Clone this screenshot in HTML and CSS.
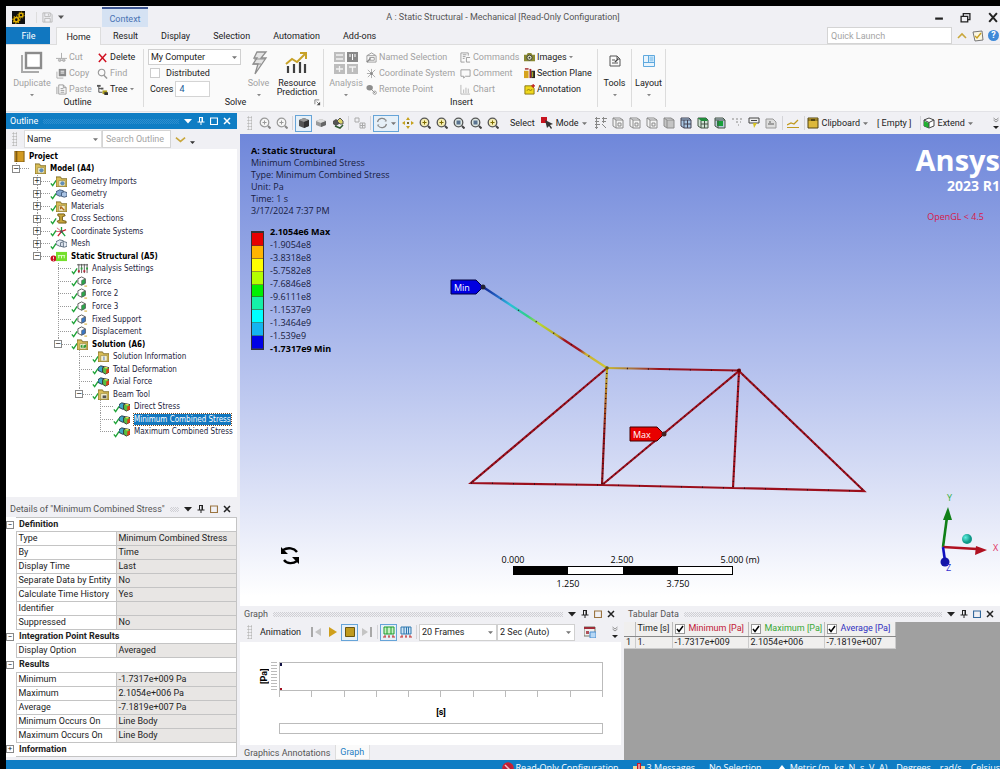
FILE: index.html
```html
<!DOCTYPE html>
<html lang="en">
<head>
    <meta charset="UTF-8">
    <title>A : Static Structural - Mechanical [Read-Only Configuration]</title>
    <link rel="stylesheet" href="styles.css">
</head>
<body>
    <!-- icon sprite -->
    <svg class="sprite" aria-hidden="true">
        <symbol id="i-gears" viewBox="0 0 12 12"><rect width="12" height="12" fill="#111"/><g fill="none" stroke="#e0b000"><circle cx="4" cy="8" r="2" stroke-width="1.6"/><circle cx="8.3" cy="3.8" r="1.8" stroke-width="1.4"/><circle cx="4" cy="8" r="3.2" stroke-dasharray="1.2 1.2"/><circle cx="8.3" cy="3.8" r="2.9" stroke-width=".8" stroke-dasharray="1.1 1.1"/></g></symbol>
        <symbol id="i-save" viewBox="0 0 12 12"><path d="M1 1h8l2 2v8H1zM3 1v4h6V1M3 11V7h6v4M7 2v2" fill="none" stroke="#b8b8b8"/></symbol>
        <symbol id="i-duplicate" viewBox="0 0 24 24"><path d="M2 4v17h17" fill="none" stroke="#aaa" stroke-width="2"/><rect x="6" y="2" width="15" height="15" fill="#fff" stroke="#8c8c8c" stroke-width="2.4"/></symbol>
        <symbol id="i-cut" viewBox="0 0 12 12"><path d="M0 7h12M6 1v6M3 9h7" stroke="#aaa" fill="none"/><circle cx="4" cy="9" r="1.4" fill="none" stroke="#aaa"/><circle cx="8.5" cy="9" r="1.4" fill="none" stroke="#aaa"/></symbol>
        <symbol id="i-copy" viewBox="0 0 12 12"><path d="M1 4v7h7" fill="none" stroke="#aaa"/><rect x="3" y="1" width="8" height="8" fill="#8a8a8a"/><path d="M5 3.5h4M5 5.5h4" stroke="#fff"/></symbol>
        <symbol id="i-paste" viewBox="0 0 12 12"><path d="M1 3v8M3 1h5l3 3v7H3zM8 1v3h3M5 5h3M5 7h4M5 9h4" fill="none" stroke="#999"/></symbol>
        <symbol id="i-delete" viewBox="0 0 12 12"><path d="M2 2l8 9M10 2l-8 9" stroke="#d01020" stroke-width="1.6"/></symbol>
        <symbol id="i-find" viewBox="0 0 12 12"><circle cx="5" cy="5" r="3.6" fill="none" stroke="#999" stroke-width="1.2"/><path d="M7.5 8l3.5 3.5" stroke="#999" stroke-width="1.6"/></symbol>
        <symbol id="i-tree" viewBox="0 0 12 12"><path d="M2 2v7h4M2 5h3" fill="none" stroke="#444"/><path d="M0 1h4v2H0z" fill="#555"/><path d="M4 4h3v2H4z" fill="#555"/><path d="M6 7h5v4H6z" fill="#b0a020"/><path d="M8 9h4v3H8z" fill="#333"/></symbol>
        <symbol id="i-bolt" viewBox="0 0 24 24"><path d="M10 1h9l-5 6h5L8 23l3-10H6l4-6H7z" fill="#e4e4e4" stroke="#8e8e8e" stroke-width="1.3"/><path d="M7 8h11M6 13h8" stroke="#8e8e8e"/></symbol>
        <symbol id="i-resource" viewBox="0 0 24 24"><path d="M3 22v-7M9 22v-9M15 22V11M20 22v-9" stroke="#404040" stroke-width="2.2"/><path d="M1 13l6-5 5 3 8-8M15 2h6v6" fill="none" stroke="#c8a228" stroke-width="2"/></symbol>
        <symbol id="i-analysis" viewBox="0 0 24 24"><path d="M0 1h11v10H0zM13 13h11v10H13zM0 13h11v10H0z" fill="#bdbdbd"/><path d="M13 1h11v10H13z" fill="#888"/><path d="M2 4h7M2 8h7M2 18h7M5.5 15v6M15 16h7M18.5 16v5" stroke="#f2f2f2" stroke-width="1.3"/><path d="M18.5 3v6M16 3v3M21 3v3" stroke="#fff"/></symbol>
        <symbol id="i-named" viewBox="0 0 12 12"><path d="M1 4l5-3 5 3v7H1zM1 4h9M4 6h5v3H4z" fill="none" stroke="#999"/><path d="M1 11l4-4" stroke="#888" stroke-width="1.5"/></symbol>
        <symbol id="i-coord" viewBox="0 0 12 12"><path d="M2 2l8 8M10 2l-8 8M6 1v10M1 6h4" stroke="#aaa"/><circle cx="6" cy="6" r="1.5" fill="#888"/></symbol>
        <symbol id="i-remote" viewBox="0 0 12 12"><ellipse cx="4" cy="4" rx="3.5" ry="3" fill="#8d8d8d"/><path d="M5 5l5 5" stroke="#888"/><circle cx="9.5" cy="9.5" r="1.8" fill="none" stroke="#999"/></symbol>
        <symbol id="i-commands" viewBox="0 0 12 12"><path d="M1 1h8v3M1 1v10h4M3 3h4M3 5h3M3 7h2" fill="none" stroke="#999"/><path d="M11 6H7v5h4" fill="none" stroke="#999"/></symbol>
        <symbol id="i-comment" viewBox="0 0 12 12"><path d="M1 2h10v7H6l-2 2V9H1z" fill="none" stroke="#999"/></symbol>
        <symbol id="i-chart" viewBox="0 0 12 12"><path d="M1 1v10h10M4 10V6M6.5 10V4M9 10V5" fill="none" stroke="#b4b4b4"/></symbol>
        <symbol id="i-camera" viewBox="0 0 12 12"><path d="M0 3h3l1-2h4l1 2h3v7H0z" fill="#8a8a32"/><circle cx="6" cy="6.2" r="2.8" fill="#dfe6c0" stroke="#333"/><circle cx="6" cy="6.2" r="1" fill="#333"/></symbol>
        <symbol id="i-section" viewBox="0 0 12 12"><path d="M0 3h5v8H0z" fill="#d6a31c"/><path d="M6 1h2v10H6z" fill="#a02020"/><path d="M8 3h4v8H8z" fill="#222"/><path d="M9.5 4v6" stroke="#d8d020"/><path d="M1 1h4" stroke="#a02020" stroke-width="1.5"/></symbol>
        <symbol id="i-annot" viewBox="0 0 12 12"><path d="M1 2h8l2 3v6H1z" fill="#f0d81c" stroke="#857410"/><path d="M3 7l2-1 2 1 2-1" fill="none" stroke="#857410"/><path d="M8 2h4M10 0v4" stroke="#c01818" stroke-width="1.2"/></symbol>
        <symbol id="i-tools" viewBox="0 0 12 12"><path d="M1 1h7l3 3v7H1zM8 1v3h3M3 5h3M3 8h6" fill="none" stroke="#555"/><path d="M6 7l3-3" stroke="#444" stroke-width="1.5"/></symbol>
        <symbol id="i-layout" viewBox="0 0 12 12"><path d="M.5.5h11v11H.5zM5.5.5v7M.5 7.5h11" fill="#e8f4fd" stroke="#5fa9de"/><path d="M6.5 1.5h4v5h-4z" fill="#9fd0f2"/></symbol>
        <symbol id="i-zoomin" viewBox="0 0 12 12"><circle cx="5.5" cy="5.5" r="4.3" fill="#f6f6f6" stroke="#999" stroke-width="1.2"/><path d="M3.5 5.5h4M5.5 3.5v4" stroke="#999"/><path d="M9 9l2.5 2.5" stroke="#888" stroke-width="2"/></symbol>
        <symbol id="i-zoomy" viewBox="0 0 12 12"><circle cx="5.5" cy="5.5" r="4.3" fill="#f4edb4" stroke="#555" stroke-width="1.3"/><path d="M3.5 5.5h4M5.5 3.5v4" stroke="#7c6a00"/><path d="M9 9l2.5 2.5" stroke="#444" stroke-width="2"/></symbol>
        <symbol id="i-zoomb" viewBox="0 0 12 12"><circle cx="5.5" cy="5.5" r="4.3" fill="#dfe8e4" stroke="#555" stroke-width="1.3"/><rect x="3.5" y="3.5" width="4" height="4" fill="#5a7390"/><path d="M9 9l2.5 2.5" stroke="#444" stroke-width="2"/></symbol>
        <symbol id="i-cube" viewBox="0 0 12 12"><path d="M6 1l5 2v6l-5 2-5-2V3z" fill="#555"/><path d="M6 1l5 2-5 2-5-2z" fill="#999"/><path d="M6 5v6l5-2V3z" fill="#333"/></symbol>
        <symbol id="i-cubel" viewBox="0 0 12 12"><path d="M6 2l5 2v4l-5 2-5-2V4z" fill="#999"/><path d="M6 2l5 2-5 2-5-2z" fill="#ddd"/><path d="M6 6v4l5-2V4z" fill="#666"/></symbol>
        <symbol id="i-cubes" viewBox="0 0 12 12"><path d="M1 4l3-2 3 2v3L4 9 1 7z" fill="#555"/><path d="M5 4l3-3 3 3v3H8z" fill="#dcd36a" stroke="#555"/><path d="M3 9l5 2 3-3" fill="none" stroke="#2f5a2f" stroke-width="1.5"/></symbol>
        <symbol id="i-boxes" viewBox="0 0 12 12"><path d="M1 1h4v4H1zM6 6h5v5H6zM8.5 6v5M6 8.5h5" fill="none" stroke="#aaa"/></symbol>
        <symbol id="i-rotate" viewBox="0 0 12 12"><path d="M1.5 5A4.7 4.7 0 0 1 10 3.5M10.5 7A4.7 4.7 0 0 1 2 8.5" fill="none" stroke="#888" stroke-width="1.2"/><path d="M10.5 2.5v2H8.500zM1.500 9.500v-2h2z" fill="#888"/></symbol>
        <symbol id="i-pan" viewBox="0 0 12 12"><path d="M6 0l2 3H4zM6 12l2-3H4zM0 6l3-2v4zM12 6L9 4v4z" fill="#c5a11c"/><path d="M5 5h2v2H5z" fill="#7d6a20"/></symbol>
        <symbol id="i-cursor" viewBox="0 0 12 12"><path d="M0 0h6v6H0z" fill="#c81420"/><path d="M4 3l8 4-3 1 2 3-1 1-2-3-2 2z" fill="#333"/></symbol>
        <symbol id="i-wires" viewBox="0 0 12 12"><path d="M0 1.5h5M7 1.5h5M0 4.500h4M7 4.500h4M0 7.500h5M0 10.500h3M7 7l4 4M1.500 0v12M8.500 0v6" fill="none" stroke="#888"/></symbol>
        <symbol id="i-wcube" viewBox="0 0 12 12"><path d="M1 1h7l3 2v8H4L1 9zM1 1l3 2h7M4 3v8M6 6h3v3H6z" fill="#f4f4f4" stroke="#8c8c8c"/></symbol>
        <symbol id="i-gcube" viewBox="0 0 12 12"><path d="M1 1h7l3 2v8H4L1 9zM1 1l3 2h7M4 3v8" fill="#c4c4c4" stroke="#8c8c8c"/></symbol>
        <symbol id="i-bmesh" viewBox="0 0 12 12"><path d="M1 1h8l2 2v8H4L1 9z" fill="#a9c6e2" stroke="#445"/><path d="M4 3v8M7.5 3v8M1 3h10M4 7h7" stroke="#445"/></symbol>
        <symbol id="i-gmesh" viewBox="0 0 12 12"><path d="M1 1h8l2 2v8H4L1 9z" fill="#cfe2d4" stroke="#454"/><path d="M1 1h8l2 3H4z" fill="#218c3c"/><path d="M4 4v7M7.5 4v7M4 7h7" stroke="#454"/></symbol>
        <symbol id="i-gmesh2" viewBox="0 0 12 12"><path d="M1 1h8l2 2v8H4L1 9z" fill="#b9c8d8" stroke="#454"/><path d="M3 4h6v5H3z" fill="#17a03a"/><path d="M4 3v8M1 3h10" stroke="#454"/></symbol>
        <symbol id="i-dots" viewBox="0 0 12 12"><path d="M1 2h2M5 2h2M9 2h2M5 5h2M7 8h1M9 5h1" stroke="#aaa" stroke-width="1.5"/></symbol>
        <symbol id="i-flag" viewBox="0 0 12 12"><path d="M1 1h10v5H1z" fill="#eee" stroke="#444"/><path d="M3 3.5h6" stroke="#444"/><path d="M5 6h4L6 11z" fill="#d4c020"/></symbol>
        <symbol id="i-abc" viewBox="0 0 12 12"><path d="M1 2h7l3 3v6H1z" fill="#ddd" stroke="#999"/><path d="M3 7h6M4 5h2" stroke="#888" stroke-width="1.5"/></symbol>
        <symbol id="i-line" viewBox="0 0 12 12"><path d="M0 8l4-2 3 1 4-4" fill="none" stroke="#c09a20" stroke-width="1.3"/><path d="M0 10.5h12" stroke="#c09a20"/></symbol>
        <symbol id="i-clip" viewBox="0 0 12 12"><path d="M1 1h10v10H1z" fill="#dcb83c" stroke="#544612"/><path d="M1 3h10" stroke="#544612"/><path d="M4 2h4v2H4z" fill="#544612"/></symbol>
        <symbol id="i-extend" viewBox="0 0 12 12"><path d="M6 1l5 2v6l-5 2-5-2V3z" fill="#fff" stroke="#444"/><path d="M1 4l5 2v5L1 9z" fill="#20b030"/><path d="M6 5.5v5M1 3l5 2.5L11 3" stroke="#444" fill="none"/></symbol>
        <symbol id="i-book" viewBox="0 0 12 12"><path d="M1 0h10v12H1z" fill="#d29a22" stroke="#7a5510"/><path d="M3 0v12" stroke="#5c3f0a"/></symbol>
        <symbol id="i-folder" viewBox="0 0 12 12"><path d="M0 1h5l1 2h6v9H0z" fill="#d8bd58" stroke="#7e6a22"/><path d="M3 5h7v6H3z" fill="#f7f2d2" stroke="#8a7a34" stroke-width=".6"/></symbol>
        <symbol id="i-fmodel" viewBox="0 0 12 12"><use href="#i-folder"/><circle cx="7" cy="8" r="2.3" fill="#5f8db8"/></symbol>
        <symbol id="i-fmat" viewBox="0 0 12 12"><use href="#i-folder"/><path d="M5 6l4 4M5 6v3" stroke="#b06818" stroke-width="1.5"/></symbol>
        <symbol id="i-finfo" viewBox="0 0 12 12"><use href="#i-folder"/><path d="M6.5 6v4" stroke="#3a6ad0"/></symbol>
        <symbol id="i-fbeam" viewBox="0 0 12 12"><use href="#i-folder"/><path d="M5 7h4v3H5z" fill="#555"/></symbol>
        <symbol id="i-fsol" viewBox="0 0 12 12"><use href="#i-folder"/><path d="M4 7l2-1v4l-2-1zM7 7l3-1v3l-3 1z" fill="#2f9a38"/></symbol>
        <symbol id="i-geom" viewBox="0 0 12 12"><path d="M0 4l4-2 4 1v5l-4 1-4-2z" fill="#86a9d2" stroke="#3f5878"/><path d="M6 5l3-1 3 1v4l-3 1-3-1z" fill="#a9c3e4" stroke="#3f5878"/></symbol>
        <symbol id="i-beam" viewBox="0 0 12 12"><path d="M2 1h7l1 2-3 1v4l4 1v2H3L1 9l3-1V4L2 3z" fill="#c8a63c" stroke="#6b5510"/></symbol>
        <symbol id="i-axes" viewBox="0 0 12 12"><path d="M6 6V1M6 6l4 5" stroke="#1f9f3f" stroke-width="1.4"/><path d="M6 6l5-2M6 6l-4 5" stroke="#d02030" stroke-width="1.4"/><path d="M6 6L1 2M6 6H0" stroke="#d06070"/><circle cx="6" cy="6" r="1.5" fill="#555"/></symbol>
        <symbol id="i-mesh" viewBox="0 0 12 12"><path d="M0 4l4-2 4 1v5l-4 1-4-2z" fill="#e4ebf4" stroke="#5a6a7c"/><path d="M5 5l4-1 3 1v4l-3 1-4-1zM8 5v5" fill="#e4ebf4" stroke="#5a6a7c"/></symbol>
        <symbol id="i-struct" viewBox="0 0 12 12"><path d="M0 1h12v10H0z" fill="#74df2c"/><path d="M2 5h8M3 5v3M6 5v3M9 5v3" stroke="#e6ffd0"/></symbol>
        <symbol id="i-settings" viewBox="0 0 12 12"><path d="M2 1v10M5 1v10M8 1v10M11 1v10M0 2h12" stroke="#555" fill="none"/><path d="M1 8h2v2H1zM7 8h2v2H7z" fill="#c02030"/><path d="M4 5h2v2H4zM10 5h2v2h-2z" fill="#2f9f3f"/></symbol>
        <symbol id="i-force" viewBox="0 0 12 12"><path d="M1 3l4-2 4 2v5l-4 2-4-2z" fill="#fff" stroke="#555"/><path d="M5 5l4-2v5l-4 2z" fill="#2aa84a" stroke="#555" stroke-width=".6"/><path d="M8 11h3" stroke="#d0a018"/></symbol>
        <symbol id="i-support" viewBox="0 0 12 12"><path d="M1 3l4-2 4 2v5l-4 2-4-2z" fill="#fff" stroke="#555"/><path d="M5 5l4-2v5l-4 2z" fill="#3a78c8" stroke="#555" stroke-width=".6"/><path d="M8 11h3" stroke="#d0a018"/></symbol>
        <symbol id="i-result" viewBox="0 0 12 12"><path d="M0 4l3-2 4 1v5l-3 1-4-2z" fill="#3fa8c8" stroke="#234"/><path d="M5 4l3-1 4 1v5l-4 2-3-2z" fill="#58c040" stroke="#333"/><path d="M9 6l3-1v4l-3 2z" fill="#d84018"/><path d="M6 4l3-1 2 1-2 1z" fill="#e8e050"/></symbol>
        <symbol id="i-check" viewBox="0 0 8 8"><path d="M1 4.5l2 2.5L7 1" fill="none" stroke="#1fa338" stroke-width="1.6"/></symbol>
        <symbol id="i-error" viewBox="0 0 8 8"><circle cx="4" cy="4.5" r="3.4" fill="#c80f22"/><path d="M4 2.5v2.5M4 6v1" stroke="#fff"/></symbol>
        <symbol id="i-caret" viewBox="0 0 8 8"><path d="M0 2h8L4 6.5z" fill="currentColor"/></symbol>
        <symbol id="i-pin" viewBox="0 0 8 8"><path d="M2.5 0v5M5.5 0v5M2 .5h4M.5 5h7M4 5v3M5 0v5" stroke="currentColor" fill="none"/></symbol>
        <symbol id="i-max" viewBox="0 0 8 8"><path d="M.5 1h7v6.5h-7z" fill="none" stroke="currentColor" stroke-width="1.2"/></symbol>
        <symbol id="i-x" viewBox="0 0 8 8"><path d="M1 1l6 6M7 1L1 7" stroke="currentColor" stroke-width="1.5"/></symbol>
        <symbol id="i-more" viewBox="0 0 8 12"><path d="M1.5 1L4 3l2.5-2M1.5 3L4 5l2.5-2" fill="none" stroke="#777" stroke-width=".8"/><path d="M1 9h6l-3 3z" fill="#222"/></symbol>
        <symbol id="i-framesg" viewBox="0 0 12 12"><path d="M1 1h10v7H1zM4 1v7M8 1v7" fill="#c9f0c4" stroke="#1d9c2c"/><path d="M0 11h3M5 11h2M9 11h3M2 9v2M6 9v2M10 9v2" fill="none" stroke="#c03030"/></symbol>
        <symbol id="i-framesb" viewBox="0 0 12 12"><path d="M1 1h10v7H1zM4 1v7M6.5 1v7M8.5 1v7" fill="#cfe5f6" stroke="#2f78b0"/><path d="M0 11h3M5 11h2M9 11h3M2 9v2M6 9v2M10 9v2" fill="none" stroke="#c03030"/></symbol>
        <symbol id="i-export" viewBox="0 0 12 12"><path d="M0 1h11v9H0z" fill="#eee" stroke="#776"/><path d="M0 2h11" stroke="#a02c38" stroke-width="2"/><path d="M2 5h3v3H2z" fill="#b05058"/><path d="M6 6h6v6H6z" fill="#b7d7f4" stroke="#4a8fd0"/></symbol>
    </svg>

    <header class="titlebar">
        <div class="quick">
            <svg class="ico13"><use href="#i-gears"/></svg>
            <button class="qa" aria-label="Save"><svg class="ico11"><use href="#i-save"/></svg></button>
            <button class="qa-more" aria-label="Customize"><svg class="ico6"><use href="#i-caret"/></svg></button>
            <div class="context">Context</div>
        </div>
        <h1>A : Static Structural - Mechanical [Read-Only Configuration]</h1>
        <div class="wincontrols">
            <button aria-label="Minimize"><svg viewBox="0 0 10 10"><path d="M2 6h7" stroke="#222" stroke-width="2"/></svg></button>
            <button aria-label="Restore"><svg viewBox="0 0 10 10"><path d="M1 4h6v5H1zM3 4V1.5h6V7H7" fill="none" stroke="#222" stroke-width="1.2"/></svg></button>
            <button aria-label="Close"><svg viewBox="0 0 10 10"><path d="M2 1l7 8M9 1L2 9" stroke="#222" stroke-width="1.8"/></svg></button>
        </div>
    </header>

    <nav class="tabs">
        <button class="tab file">File</button>
        <button class="tab home">Home</button>
        <button class="tab">Result</button>
        <button class="tab">Display</button>
        <button class="tab">Selection</button>
        <button class="tab">Automation</button>
        <button class="tab">Add-ons</button>
        <div class="launch">
            <input type="text" placeholder="Quick Launch" aria-label="Quick Launch">
            <button aria-label="Collapse ribbon"><svg viewBox="0 0 12 12"><path d="M2 8l4-4 4 4" fill="none" stroke="#c9a73c" stroke-width="1.6"/></svg></button>
            <button aria-label="Options"><svg viewBox="0 0 12 12"><path d="M1 2l9-1 1 9-8 1z" fill="#fbf6e0" stroke="#777"/><path d="M3 6l2 2 4-5" fill="none" stroke="#c9a020" stroke-width="1.4"/></svg></button>
            <button class="help" aria-label="Help">?</button>
        </div>
    </nav>

    <section class="ribbon">
        <div class="group g-outline">
            <div class="items">
                <button class="big off"><svg><use href="#i-duplicate"/></svg>Duplicate<svg class="car"><use href="#i-caret"/></svg></button>
                <div class="col c1">
                    <button class="off"><svg><use href="#i-cut"/></svg>Cut</button>
                    <button class="off"><svg><use href="#i-copy"/></svg>Copy</button>
                    <button class="off"><svg><use href="#i-paste"/></svg>Paste</button>
                </div>
                <div class="col">
                    <button><svg><use href="#i-delete"/></svg>Delete</button>
                    <button class="off"><svg><use href="#i-find"/></svg>Find</button>
                    <button><svg><use href="#i-tree"/></svg>Tree<svg class="car"><use href="#i-caret"/></svg></button>
                </div>
            </div>
            <div class="caption">Outline</div>
        </div>
        <div class="group g-solve">
            <div class="items">
                <div class="col solvecol">
                    <select aria-label="Solve process"><option>My Computer</option></select>
                    <label><input type="checkbox">Distributed</label>
                    <label class="corerow">Cores<input class="cores" type="text" value="4"></label>
                </div>
                <button class="big off"><svg><use href="#i-bolt"/></svg>Solve<svg class="car"><use href="#i-caret"/></svg></button>
                <button class="big wide"><svg><use href="#i-resource"/></svg>Resource<br>Prediction</button>
            </div>
            <div class="caption">Solve<svg class="launcher" viewBox="0 0 8 8"><path d="M1 6V1h5M3 3l3 3" fill="none" stroke="#777"/><path d="M7 3v4H3z" fill="#555"/></svg></div>
        </div>
        <div class="group g-insert">
            <div class="items">
                <button class="big off"><svg><use href="#i-analysis"/></svg>Analysis<svg class="car"><use href="#i-caret"/></svg></button>
                <div class="col c2">
                    <button class="off"><svg><use href="#i-named"/></svg>Named Selection</button>
                    <button class="off"><svg><use href="#i-coord"/></svg>Coordinate System</button>
                    <button class="off"><svg><use href="#i-remote"/></svg>Remote Point</button>
                </div>
                <div class="col c3">
                    <button class="off"><svg><use href="#i-commands"/></svg>Commands</button>
                    <button class="off"><svg><use href="#i-comment"/></svg>Comment</button>
                    <button class="off"><svg><use href="#i-chart"/></svg>Chart</button>
                </div>
                <div class="col">
                    <button><svg><use href="#i-camera"/></svg>Images<svg class="car"><use href="#i-caret"/></svg></button>
                    <button><svg><use href="#i-section"/></svg>Section Plane</button>
                    <button><svg><use href="#i-annot"/></svg>Annotation</button>
                </div>
            </div>
            <div class="caption">Insert</div>
        </div>
        <div class="group g-small">
            <button class="big small"><svg><use href="#i-tools"/></svg>Tools<svg class="car"><use href="#i-caret"/></svg></button>
        </div>
        <div class="group g-small">
            <button class="big small"><svg><use href="#i-layout"/></svg>Layout<svg class="car"><use href="#i-caret"/></svg></button>
        </div>
    </section>

    <main class="workspace">
        <aside class="left">
            <section class="outline">
                <div class="panelhead active"><h2>Outline</h2><span class="dots"></span>
                    <button aria-label="Menu"><svg><use href="#i-caret"/></svg></button><button aria-label="Pin"><svg><use href="#i-pin"/></svg></button><button aria-label="Maximize"><svg><use href="#i-max"/></svg></button><button aria-label="Close"><svg><use href="#i-x"/></svg></button>
                </div>
                <div class="filter">
                    <span class="grip"></span>
                    <select aria-label="Filter by"><option>Name</option></select>
                    <input type="text" placeholder="Search Outline" aria-label="Search Outline">
                    <button aria-label="Expand"><svg class="ico11" viewBox="0 0 12 12"><path d="M1 4l5 4 5-4" fill="none" stroke="#c9a73c" stroke-width="1.8"/></svg></button>
                    <button class="low" aria-label="More"><svg class="ico5"><use href="#i-caret"/></svg></button>
                </div>
                <ul class="tree">
                    <li class="l0"><svg class="ic"><use href="#i-book"/></svg><strong>Project</strong></li>
                    <li class="l1 last"><span class="tg"><button>−</button></span><svg class="st"></svg><svg class="ic"><use href="#i-fmodel"/></svg><strong>Model (A4)</strong></li>
                    <li class="l2"><span class="tg"><button>+</button></span><svg class="st"><use href="#i-check"/></svg><svg class="ic"><use href="#i-fmodel"/></svg><span>Geometry Imports</span></li>
                    <li class="l2"><span class="tg"><button>+</button></span><svg class="st"><use href="#i-check"/></svg><svg class="ic"><use href="#i-geom"/></svg><span>Geometry</span></li>
                    <li class="l2"><span class="tg"><button>+</button></span><svg class="st"><use href="#i-check"/></svg><svg class="ic"><use href="#i-fmat"/></svg><span>Materials</span></li>
                    <li class="l2"><span class="tg"><button>+</button></span><svg class="st"><use href="#i-check"/></svg><svg class="ic"><use href="#i-beam"/></svg><span>Cross Sections</span></li>
                    <li class="l2"><span class="tg"><button>+</button></span><svg class="st"><use href="#i-check"/></svg><svg class="ic"><use href="#i-axes"/></svg><span>Coordinate Systems</span></li>
                    <li class="l2"><span class="tg"><button>+</button></span><svg class="st"><use href="#i-check"/></svg><svg class="ic"><use href="#i-mesh"/></svg><span>Mesh</span></li>
                    <li class="l2 last"><span class="tg"><button>−</button></span><svg class="st"><use href="#i-error"/></svg><svg class="ic"><use href="#i-struct"/></svg><strong>Static Structural (A5)</strong></li>
                    <li class="l3"><span class="tg"></span><svg class="st"><use href="#i-check"/></svg><svg class="ic"><use href="#i-settings"/></svg><span>Analysis Settings</span></li>
                    <li class="l3"><span class="tg"></span><svg class="st"><use href="#i-check"/></svg><svg class="ic"><use href="#i-force"/></svg><span>Force</span></li>
                    <li class="l3"><span class="tg"></span><svg class="st"><use href="#i-check"/></svg><svg class="ic"><use href="#i-force"/></svg><span>Force 2</span></li>
                    <li class="l3"><span class="tg"></span><svg class="st"><use href="#i-check"/></svg><svg class="ic"><use href="#i-force"/></svg><span>Force 3</span></li>
                    <li class="l3"><span class="tg"></span><svg class="st"><use href="#i-check"/></svg><svg class="ic"><use href="#i-support"/></svg><span>Fixed Support</span></li>
                    <li class="l3"><span class="tg"></span><svg class="st"><use href="#i-check"/></svg><svg class="ic"><use href="#i-support"/></svg><span>Displacement</span></li>
                    <li class="l3 last"><span class="tg"><button>−</button></span><svg class="st"><use href="#i-check"/></svg><svg class="ic"><use href="#i-fsol"/></svg><strong>Solution (A6)</strong></li>
                    <li class="l4"><span class="tg"></span><svg class="st"><use href="#i-check"/></svg><svg class="ic"><use href="#i-finfo"/></svg><span>Solution Information</span></li>
                    <li class="l4"><span class="tg"></span><svg class="st"><use href="#i-check"/></svg><svg class="ic"><use href="#i-result"/></svg><span>Total Deformation</span></li>
                    <li class="l4"><span class="tg"></span><svg class="st"><use href="#i-check"/></svg><svg class="ic"><use href="#i-result"/></svg><span>Axial Force</span></li>
                    <li class="l4 last"><span class="tg"><button>−</button></span><svg class="st"><use href="#i-check"/></svg><svg class="ic"><use href="#i-fbeam"/></svg><span>Beam Tool</span></li>
                    <li class="l5"><span class="tg"></span><svg class="st"><use href="#i-check"/></svg><svg class="ic"><use href="#i-result"/></svg><span>Direct Stress</span></li>
                    <li class="l5"><span class="tg"></span><svg class="st"><use href="#i-check"/></svg><svg class="ic"><use href="#i-result"/></svg><span class="selected">Minimum Combined Stress</span></li>
                    <li class="l5 last"><span class="tg"></span><svg class="st"><use href="#i-check"/></svg><svg class="ic"><use href="#i-result"/></svg><span>Maximum Combined Stress</span></li>
                </ul>
            </section>
            <section class="details">
                <div class="panelhead"><h2>Details of "Minimum Combined Stress"</h2><span class="dots"></span>
                    <button aria-label="Menu"><svg><use href="#i-caret"/></svg></button><button aria-label="Pin"><svg><use href="#i-pin"/></svg></button><button class="gold" aria-label="Maximize"><svg><use href="#i-max"/></svg></button><button aria-label="Close"><svg><use href="#i-x"/></svg></button>
                </div>
                <table class="props">
                    <colgroup><col class="k0"><col class="k1"><col></colgroup>
                    <tr><td class="ex"><button>−</button></td><th colspan="2">Definition</th></tr>
                    <tr><td></td><td>Type</td><td>Minimum Combined Stress</td></tr>
                    <tr><td></td><td>By</td><td>Time</td></tr>
                    <tr><td></td><td>Display Time</td><td>Last</td></tr>
                    <tr><td></td><td>Separate Data by Entity</td><td>No</td></tr>
                    <tr><td></td><td>Calculate Time History</td><td>Yes</td></tr>
                    <tr><td></td><td>Identifier</td><td></td></tr>
                    <tr><td></td><td>Suppressed</td><td>No</td></tr>
                    <tr><td class="ex"><button>−</button></td><th colspan="2">Integration Point Results</th></tr>
                    <tr><td></td><td>Display Option</td><td>Averaged</td></tr>
                    <tr><td class="ex"><button>−</button></td><th colspan="2">Results</th></tr>
                    <tr><td></td><td>Minimum</td><td>-1.7317e+009 Pa</td></tr>
                    <tr><td></td><td>Maximum</td><td>2.1054e+006 Pa</td></tr>
                    <tr><td></td><td>Average</td><td>-7.1819e+007 Pa</td></tr>
                    <tr><td></td><td>Minimum Occurs On</td><td>Line Body</td></tr>
                    <tr><td></td><td>Maximum Occurs On</td><td>Line Body</td></tr>
                    <tr><td class="ex"><button>+</button></td><th colspan="2">Information</th></tr>
                </table>
            </section>
        </aside>

        <div class="right">
            <div class="toolbar">
                <span class="grip"></span>
                <button><svg><use href="#i-zoomin"/></svg></button>
                <button><svg><use href="#i-zoomin"/></svg></button>
                <span class="sep"></span>
                <button class="on"><svg><use href="#i-cube"/></svg></button>
                <button><svg><use href="#i-cubel"/></svg></button>
                <button><svg><use href="#i-cubes"/></svg></button>
                <span class="sep"></span>
                <button><svg><use href="#i-boxes"/></svg></button>
                <span class="sep"></span>
                <button class="on drop"><svg><use href="#i-rotate"/></svg><svg class="car"><use href="#i-caret"/></svg></button>
                <button><svg><use href="#i-pan"/></svg></button>
                <button><svg><use href="#i-zoomy"/></svg></button>
                <button><svg><use href="#i-zoomy"/></svg></button>
                <button><svg><use href="#i-zoomb"/></svg></button>
                <button><svg><use href="#i-zoomb"/></svg></button>
                <button><svg><use href="#i-zoomy"/></svg></button>
                <span class="lbl">Select</span>
                <button class="txt mode"><svg><use href="#i-cursor"/></svg>Mode<svg class="car"><use href="#i-caret"/></svg></button>
                <button><svg><use href="#i-wires"/></svg></button>
                <button><svg><use href="#i-wcube"/></svg></button>
                <button><svg><use href="#i-wcube"/></svg></button>
                <button><svg><use href="#i-wcube"/></svg></button>
                <button><svg><use href="#i-gcube"/></svg></button>
                <button><svg><use href="#i-bmesh"/></svg></button>
                <button><svg><use href="#i-gmesh"/></svg></button>
                <button><svg><use href="#i-gmesh2"/></svg></button>
                <button><svg><use href="#i-dots"/></svg></button>
                <button><svg><use href="#i-flag"/></svg></button>
                <button><svg><use href="#i-abc"/></svg></button>
                <span class="sep"></span>
                <button><svg><use href="#i-line"/></svg></button>
                <span class="sep"></span>
                <button class="txt"><svg><use href="#i-clip"/></svg>Clipboard<svg class="car"><use href="#i-caret"/></svg></button>
                <span class="lbl">[ Empty ]</span>
                <span class="sep"></span>
                <button class="txt"><svg><use href="#i-extend"/></svg>Extend<svg class="car"><use href="#i-caret"/></svg></button>
                <button class="more"><svg><use href="#i-more"/></svg></button>
            </div>

            <section class="viewport">
                <svg class="scene" viewBox="0 0 760 472">
                    <defs>
                        <linearGradient id="arm" gradientUnits="userSpaceOnUse" x1="243" y1="153" x2="367" y2="234">
                            <stop offset="0" stop-color="#102090"/><stop offset=".12" stop-color="#2468c8"/><stop offset=".22" stop-color="#28c0d8"/><stop offset=".36" stop-color="#30d088"/><stop offset=".45" stop-color="#b8d830"/><stop offset=".6" stop-color="#b8a828"/><stop offset=".66" stop-color="#a01020"/><stop offset=".78" stop-color="#a01820"/><stop offset=".83" stop-color="#c8b030"/><stop offset="1" stop-color="#d0c838"/>
                        </linearGradient>
                        <linearGradient id="top" gradientUnits="userSpaceOnUse" x1="367" y1="0" x2="420" y2="0"><stop offset="0" stop-color="#c8b830"/><stop offset=".5" stop-color="#a87040"/><stop offset="1" stop-color="#98101c"/></linearGradient>
                        <linearGradient id="post" gradientUnits="userSpaceOnUse" x1="0" y1="234" x2="0" y2="300"><stop offset="0" stop-color="#c0b028"/><stop offset="1" stop-color="#8c1018"/></linearGradient>
                        <radialGradient id="ball" cx=".35" cy=".35"><stop offset="0" stop-color="#60f0e0"/><stop offset="1" stop-color="#109888"/></radialGradient>
                    </defs>
                    <g class="members">
                        <path d="M367 234L231 349L362 351L493 354L624 357L499 237M362 351L499 237L493 354"/>
                        <path d="M367 234L362 351" stroke="url(#post)"/>
                        <path d="M367 234L499 236.5" stroke="url(#top)"/>
                        <path d="M243 153L367 234" stroke="url(#arm)"/>
                    </g>
                    <g class="nodes">
                        <path d="M367 234L231 349M499 237L362 351M367 234L362 351M499 237L493 354M499 237L624 357"/>
                        <path class="sparse" d="M231 349L362 351L493 354L624 357M243 153L367 234L499 237"/>
                    </g>
                    <path d="M211 146h25l7 7-7 7h-25z" fill="#0000e0" stroke="#000040"/>
                    <text x="214" y="157" class="tag">Min</text>
                    <circle cx="243" cy="153" r="2.5" fill="#223"/>
                    <path d="M390 293h27l7 7-7 7h-27z" fill="#e80000" stroke="#400"/>
                    <text x="393" y="304" class="tag">Max</text>
                    <circle cx="424" cy="300" r="2.5" fill="#422"/>
                    <circle cx="367" cy="234" r="1.8" fill="#665a18"/>
                    <circle cx="499" cy="236.5" r="2" fill="#600"/>

                    <g fill="none" stroke="#000" stroke-width="2.4"><path d="M43 416c5-3 11-2 14 2M57 427c-4 3-10 3-13-1"/></g>
                    <path d="M41 413v7h7zM59 430v-7h-7z"/>

                    <g class="scale">
                        <rect x="273.5" y="432.5" width="219" height="8" fill="#fff" stroke="#000"/>
                        <path d="M273 432h55v9h-55zM383 432h55v9h-55z"/>
                        <text x="273" y="429">0.000</text><text x="382" y="429">2.500</text><text x="500" y="429">5.000 (m)</text>
                        <text x="328" y="453">1.250</text><text x="438" y="453">3.750</text>
                    </g>

                    <g class="triad">
                        <path d="M703 413l4-30" stroke="#108018" stroke-width="2.6"/><path d="M708 373l4 13h-9z" fill="#108018"/>
                        <path d="M703 413l34 2" stroke="#b01020" stroke-width="2.6"/><path d="M747 416l-12 5 1-9z" fill="#b01020"/>
                        <path d="M703 413l2 14" stroke="#1010c0" stroke-width="2.6"/><circle cx="705" cy="428" r="4.5" fill="#1414a8"/>
                        <circle cx="727" cy="405" r="5" fill="url(#ball)"/>
                        <text x="707" y="367" fill="#30b040">Y</text><text x="753" y="417" fill="#e03060">X</text><text x="706" y="437" fill="#3030d0">Z</text>
                    </g>
                </svg>
                <div class="info">
                    <strong>A: Static Structural</strong>
                    <span>Minimum Combined Stress</span>
                    <span>Type: Minimum Combined Stress</span>
                    <span>Unit: Pa</span>
                    <span>Time: 1 s</span>
                    <span>3/17/2024 7:37 PM</span>
                </div>
                <div class="legend">
                    <div class="bands"><i class="b1"></i><i class="b2"></i><i class="b3"></i><i class="b4"></i><i class="b5"></i><i class="b6"></i><i class="b7"></i><i class="b8"></i><i class="b9"></i></div>
                    <div class="values"><strong>2.1054e6 Max</strong><span>-1.9054e8</span><span>-3.8318e8</span><span>-5.7582e8</span><span>-7.6846e8</span><span>-9.6111e8</span><span>-1.1537e9</span><span>-1.3464e9</span><span>-1.539e9</span><strong>-1.7317e9 Min</strong></div>
                </div>
                <div class="brand">
                    <div class="name">Ansys</div>
                    <div class="release">2023 R1</div>
                    <div class="gl">OpenGL &lt; 4.5</div>
                </div>
            </section>

            <div class="bottom">
                <section class="graph">
                    <div class="panelhead"><h2>Graph</h2><span class="dots"></span>
                        <button aria-label="Menu"><svg><use href="#i-caret"/></svg></button><button aria-label="Pin"><svg><use href="#i-pin"/></svg></button><button class="gold" aria-label="Maximize"><svg><use href="#i-max"/></svg></button><button aria-label="Close"><svg><use href="#i-x"/></svg></button>
                    </div>
                    <div class="animbar">
                        <span class="grip"></span>
                        <span class="lbl">Animation</span>
                        <button aria-label="First"><svg viewBox="0 0 12 12"><path d="M2 1v10" stroke="#a8a8a8" stroke-width="2"/><path d="M11 2v8L5 6z" fill="#c4c4c4"/></svg></button>
                        <button aria-label="Play"><svg viewBox="0 0 12 12"><path d="M2 1l8 5-8 5z" fill="#cf9f1c"/></svg></button>
                        <button class="on" aria-label="Stop"><svg viewBox="0 0 12 12"><path d="M1.5 1.5h9v9h-9z" fill="#bf9a1e" stroke="#6b5510"/></svg></button>
                        <button aria-label="Last"><svg viewBox="0 0 12 12"><path d="M10 1v10" stroke="#a8a8a8" stroke-width="2"/><path d="M1 2v8l6-4z" fill="#c4c4c4"/></svg></button>
                        <span class="sep"></span>
                        <button class="on" aria-label="Distributed"><svg><use href="#i-framesg"/></svg></button>
                        <button aria-label="Result sets"><svg><use href="#i-framesb"/></svg></button>
                        <span class="sep"></span>
                        <select aria-label="Frames"><option>20 Frames</option></select>
                        <select aria-label="Duration"><option>2 Sec (Auto)</option></select>
                        <button class="exp" aria-label="Export"><svg><use href="#i-export"/></svg></button>
                        <button class="more"><svg><use href="#i-more"/></svg></button>
                    </div>
                    <div class="chart">
                        <span class="ylab">[Pa]</span>
                        <span class="yticks"></span>
                        <div class="plot"></div>
                        <div class="xticks"><i></i><i></i><i></i><i></i><i></i><i></i><i></i><i></i><i></i><i></i></div>
                        <span class="xlab">[s]</span>
                        <div class="range"></div>
                    </div>
                    <div class="sheets"><button>Graphics Annotations</button><button class="current">Graph</button></div>
                </section>
                <section class="tabular">
                    <div class="panelhead"><h2>Tabular Data</h2><span class="dots"></span>
                        <button aria-label="Menu"><svg><use href="#i-caret"/></svg></button><button aria-label="Pin"><svg><use href="#i-pin"/></svg></button><button class="blue" aria-label="Maximize"><svg><use href="#i-max"/></svg></button><button aria-label="Close"><svg><use href="#i-x"/></svg></button>
                    </div>
                    <table class="data">
                        <tr><th></th><th>Time [s]</th><th><label class="min"><input type="checkbox" checked>Minimum [Pa]</label></th><th><label class="max"><input type="checkbox" checked>Maximum [Pa]</label></th><th><label class="avg"><input type="checkbox" checked>Average [Pa]</label></th></tr>
                        <tr><td>1</td><td>1.</td><td>-1.7317e+009</td><td>2.1054e+006</td><td>-7.1819e+007</td></tr>
                    </table>
                </section>
            </div>
        </div>
    </main>

    <footer class="status">
        <span class="wide"><svg viewBox="0 0 12 12"><circle cx="6" cy="6" r="5" fill="#b8203a" stroke="#d02030" stroke-width="1.5"/><path d="M3 3l6 6" stroke="#f0c0c8" stroke-width="1.5"/></svg>Read-Only Configuration</span>
        <span class="wide"><svg viewBox="0 0 12 12"><path d="M0 4h12v6H0z" fill="#e8d8a0"/><path d="M4 1h4v8H4z" fill="#c81828"/><path d="M6 2v5" stroke="#fff"/></svg>3 Messages</span>
        <span class="wide">No Selection</span>
        <span><svg viewBox="0 0 12 12"><path d="M6 3l4 5H2z" fill="#fff"/></svg>Metric (m, kg, N, s, V, A)</span>
        <span>Degrees</span>
        <span>rad/s</span>
        <span>Celsius</span>
    </footer>
</body>
</html>
```
FILE: styles.css
```css
* {
    box-sizing: border-box;
}

body {
    margin: 0;
    height: 100vh;
    padding: 6px 0 0 6px;
    background: #000;
    color: #222;
    font: 9px/12px Roboto, "Open Sans", sans-serif;
    display: flex;
    flex-direction: column;
    overflow: hidden;
}

button, input, select {
    font: inherit;
    color: inherit;
    margin: 0;
    padding: 0;
    border: 0;
    border-radius: 0;
    background: none;
    white-space: nowrap;
}

h1, h2 {
    margin: 0;
    font-size: 9px;
    font-weight: normal;
}

svg {
    flex: none;
    display: block;
}

.sprite {
    position: absolute;
    width: 0;
    height: 0;
}

select {
    appearance: none;
    border: 1px solid #d0d0d0;
    background: url("data:image/svg+xml,%3Csvg xmlns='http://www.w3.org/2000/svg' viewBox='0 0 8 8'%3E%3Cpath d='M0 2h8L4 6.5z' fill='%23777'/%3E%3C/svg%3E") no-repeat right 3px center / 5px 5px #fff;
    padding-left: 2px;
}

input[type="text"] {
    background: #fff;
    border: 1px solid #d4d4d4;
    padding-left: 3px;
}

input::placeholder {
    color: #a4a4a4;
    opacity: 1;
}

.ico13 { width: 13px; height: 13px; }
.ico11 { width: 11px; height: 11px; }
.ico6 { width: 6px; height: 6px; }
.ico5 { width: 5px; height: 5px; }

/* title bar */
.titlebar {
    height: 21px;
    flex: none;
    display: grid;
    grid-template-columns: 1fr auto 1fr;
    align-items: center;
    background: #f0f0f4;
}

.quick {
    display: flex;
    align-items: center;
    padding-left: 6px;
}

.qa {
    margin-left: 11px;
    padding-left: 5px;
    border-left: 1px solid #ddd;
}

.qa-more {
    margin-left: 5px;
    color: #555;
}

.context {
    width: 46px;
    height: 21px;
    margin-left: 38px;
    border-top: 2px solid #3c5490;
    background: #d5e2f3;
    color: #4a72b4;
    line-height: 20px;
    text-align: center;
}

.titlebar h1 {
    color: #555;
    line-height: 22px;
}

.wincontrols {
    display: flex;
    justify-content: flex-end;
    gap: 16px;
    padding-right: 2px;
}

.wincontrols svg {
    width: 11px;
    height: 11px;
}

/* ribbon tabs */
.tabs {
    height: 18px;
    flex: none;
    display: flex;
    background: #f0f0f4;
    border-bottom: 1px solid #ddd;
}

.tab {
    padding: 0 11px 0 12px;
    line-height: 18px;
}

.file {
    width: 44px;
    background: #1177c0;
    color: #fff;
}

.home {
    width: 45px;
    margin-left: 6px;
    padding: 0;
    height: 18px;
    border: 1px solid #ddd;
    border-bottom: 0;
    background: #fafafa;
    line-height: 16px;
}

.launch {
    margin-left: auto;
    display: flex;
    align-items: center;
    gap: 4px;
}

.launch input {
    width: 125px;
    height: 17px;
}

.launch svg {
    width: 12px;
    height: 12px;
}

.help {
    width: 11px;
    height: 11px;
    border-radius: 50%;
    background: #3f8ad8;
    color: #fff;
    font-weight: bold;
    line-height: 11px;
    margin-right: 1px;
}

/* ribbon */
.ribbon {
    height: 67px;
    flex: none;
    display: flex;
    padding: 4px 0;
    background: #fafafa;
    border-bottom: 1px solid #e2e2e6;
}

.group {
    display: flex;
    flex-direction: column;
    border-right: 1px solid #dcdcdc;
}

.g-outline { width: 138px; padding-left: 6px; }
.g-solve { width: 180px; padding-left: 4px; }
.g-insert { width: 274px; padding-left: 2px; }
.g-small { width: 34px; }

.items {
    display: flex;
}

.col {
    display: flex;
    flex-direction: column;
}

.col button {
    display: flex;
    align-items: center;
    height: 16px;
    gap: 2px;
}

.col button svg {
    width: 11px;
    height: 11px;
}

.c1 { width: 41px; margin-left: 4px; }
.c2 { width: 94px; }
.c3 { width: 64px; }

.big {
    width: 40px;
    display: flex;
    flex-direction: column;
    align-items: center;
    text-align: center;
    line-height: 9px;
}

.big svg {
    width: 24px;
    height: 24px;
    margin: 2px 0 4px;
}

.small {
    width: 100%;
}

.small svg {
    width: 12px;
    height: 12px;
    margin: 6px 0 12px;
}

.group .car {
    width: 4px;
    height: 4px;
    margin: 5px 0 0;
    color: #888;
}

.group .col .car {
    width: 4px;
    height: 4px;
    margin: 0;
}

.off {
    color: #a2a2a2;
}

.solvecol {
    width: 93px;
}

.solvecol select {
    height: 16px;
}

.solvecol label {
    display: flex;
    align-items: center;
    gap: 6px;
    height: 16px;
    padding-left: 2px;
}

.solvecol .corerow {
    gap: 2px;
}

.solvecol input[type="checkbox"] {
    appearance: none;
    width: 10px;
    height: 10px;
    border: 1px solid #ccc;
    background: #fff;
}

.solvecol .cores {
    width: 35px;
    height: 16px;
    color: #1a5a98;
}

.g-solve .big { width: 35px; }
.g-solve .wide { width: 42px; }

.caption {
    margin-top: auto;
    line-height: 10px;
    text-align: center;
    position: relative;
}

.launcher {
    position: absolute;
    right: 2px;
    top: 2px;
    width: 7px;
    height: 7px;
}

/* workspace */
.workspace {
    flex: 1;
    min-height: 0;
    display: flex;
    gap: 3px;
    background: #f0f0f4;
}

.left {
    width: 231px;
    flex: none;
    display: flex;
    flex-direction: column;
    padding: 1px 0 3px;
    gap: 4px;
}

.outline {
    flex: 1;
    min-height: 0;
    display: flex;
    flex-direction: column;
    background: #fff;
}

.panelhead {
    height: 16px;
    flex: none;
    display: flex;
    align-items: center;
    gap: 5px;
    padding: 0 6px 0 4px;
    background: #f0f0f4;
    color: #555;
}

.panelhead.active {
    background: #0f7dc4;
    color: #fff;
}

.panelhead h2 {
    white-space: nowrap;
}

.panelhead .dots {
    flex: 1;
    height: 5px;
    background:
        linear-gradient(#c2c2c8, #c2c2c8) 0 0 / 0 0 no-repeat,
        conic-gradient(#cfcfd4 25%, transparent 0 50%, #cfcfd4 0 75%, transparent 0) 0 0 / 2px 2px;
}

.panelhead.active .dots {
    background: conic-gradient(#2f8fd0 25%, transparent 0 50%, #2f8fd0 0 75%, transparent 0) 0 0 / 2px 2px;
}

.panelhead svg {
    width: 8px;
    height: 8px;
}

.panelhead button {
    color: #222;
}

.panelhead.active button {
    color: #fff;
}

.panelhead .gold { color: #9a7440; }
.panelhead .blue { color: #34699c; }

.grip {
    width: 5px;
    height: 14px;
    background: radial-gradient(circle, #bbb 40%, transparent 60%) 0 0 / 3px 3px;
}

.filter {
    height: 20px;
    flex: none;
    display: flex;
    align-items: center;
    padding-left: 6px;
    background: #f0f0f4;
}

.filter select {
    width: 78px;
    height: 18px;
    margin-left: 7px;
    border-color: #ddd;
}

.filter input {
    width: 69px;
    height: 18px;
}

.filter button {
    margin-left: 4px;
}

.filter .low {
    padding-top: 7px;
    color: #333;
}

.tree {
    list-style: none;
    margin: 0;
    padding: 1px 0 0;
    height: 289px;
    display: grid;
    grid-auto-rows: 1fr;
    font: 8px/11px "DejaVu Sans Condensed", "DejaVu Sans", sans-serif;
    font-stretch: condensed;
    color: #24243c;
}

.tree li {
    display: flex;
    align-items: center;
    white-space: nowrap;
}

.tree strong {
    color: #000;
}

.l0 { padding-left: 8px; }
.l1 { padding-left: 6px; }
.l2 { padding-left: 27px; }
.l3 { padding-left: 48px; }
.l4 { padding-left: 69px; }
.l5 { padding-left: 90px; }

.tg {
    width: 17px;
    align-self: stretch;
    display: flex;
    align-items: center;
    background:
        repeating-linear-gradient(#999 0 1px, transparent 1px 2px) 4px 0 / 1px 100% no-repeat,
        repeating-linear-gradient(90deg, #999 0 1px, transparent 1px 2px) 4px 50% / 13px 1px no-repeat;
}

.last .tg {
    background:
        repeating-linear-gradient(#999 0 1px, transparent 1px 2px) 4px 0 / 1px 50% no-repeat,
        repeating-linear-gradient(90deg, #999 0 1px, transparent 1px 2px) 4px 50% / 13px 1px no-repeat;
}

.tg button, .ex button {
    width: 8px;
    height: 8px;
    border: 1px solid #888;
    background: #fff;
    color: #222;
    font-size: 8px;
    line-height: 6px;
    display: block;
}

.st {
    width: 7px;
    height: 8px;
    margin: 4px -1px 0 0;
}

.ic {
    width: 11px;
    height: 11px;
    margin-right: 4px;
}

.selected {
    background: #1177c0;
    color: #fff;
    outline: 1px dotted #7a4a20;
}

/* details grid */
.props {
    width: 100%;
    height: 240px;
    border-collapse: collapse;
    table-layout: fixed;
    background: #fff;
    line-height: 11px;
}

.k0 { width: 10px; }
.k1 { width: 100px; }

.props td, .props th {
    padding: 0 0 0 2px;
    border: 1px solid #c4c4c4;
    text-align: left;
    white-space: nowrap;
}

.props td:first-child {
    padding: 0;
    border: 0;
}

.props td:nth-child(3) {
    background: #e8e6e4;
}

.props th {
    border-left: 0;
    padding-left: 3px;
}

/* graphics toolbar */
.right {
    flex: 1;
    min-width: 0;
    display: flex;
    flex-direction: column;
}

.toolbar {
    height: 22px;
    flex: none;
    display: flex;
    align-items: center;
    padding-left: 7px;
}

.toolbar .grip {
    margin-right: 4px;
}

.toolbar button {
    width: 17px;
    height: 17px;
    flex: none;
    display: flex;
    align-items: center;
    justify-content: center;
    gap: 3px;
}

.toolbar svg {
    width: 12px;
    height: 12px;
}

.toolbar .car {
    width: 5px;
    height: 5px;
    color: #777;
}

.toolbar .on, .animbar .on {
    border: 1px solid #66a4d8;
    background: #e6f0f8;
}

.toolbar .drop {
    width: 26px;
}

.toolbar .txt {
    width: auto;
}

.toolbar .mode {
    margin-right: 6px;
}

.toolbar .lbl {
    padding: 0 6px 0 9px;
    white-space: nowrap;
}

.sep {
    width: 1px;
    height: 14px;
    margin: 0 2px;
    background: #d4d4d8;
}

.toolbar .more {
    width: 8px;
    margin-left: auto;
}

/* 3D view */
.viewport {
    flex: 1;
    min-height: 0;
    position: relative;
    padding: 11px 0 0 11px;
    background: linear-gradient(#6f87da 0%, #b2bfed 48%, #dfe4f7 78%, #fff 98%);
    font-family: "Open Sans", sans-serif;
    color: #182040;
}

.scene {
    position: absolute;
    left: 0;
    top: 0;
    width: 100%;
    height: 100%;
}

.members {
    fill: none;
    stroke: #9c0f1c;
    stroke-width: 2.2;
}

.nodes {
    fill: none;
    stroke: #301018;
    stroke-width: 1.4;
    stroke-dasharray: 1 4;
}

.sparse {
    stroke-dasharray: 1 20;
}

.tag {
    font-size: 9px;
    fill: #fff;
}

.scale text {
    font-size: 9px;
    text-anchor: middle;
}

.triad text {
    font-size: 9px;
}

.info {
    display: grid;
    grid-auto-rows: 1fr;
    height: 70px;
}

.info strong, .values strong {
    color: #000;
}

.legend {
    display: flex;
    gap: 6px;
    margin-top: 10px;
}

.bands {
    width: 13px;
    margin-top: 6px;
    border: 1px solid #333;
    border-top-width: 2px;
    display: flex;
    flex-direction: column;
    height: 119px;
}

.bands i {
    flex: 1;
    border-bottom: 1px solid #4448;
}

.b1 { background: #e60000; }
.b2 { background: #ffb400; }
.b3 { background: #ffff00; }
.b4 { background: #b4ff00; }
.b5 { background: #00f000; }
.b6 { background: #14f0a8; }
.b7 { background: #00ffff; }
.b8 { background: #14b4f0; }
.b9 { background: #0000e6; }

.values {
    display: flex;
    flex-direction: column;
    line-height: 13px;
}

.brand {
    position: absolute;
    top: 7px;
    right: 0;
    text-align: right;
    color: #fff;
    font-weight: bold;
}

.name {
    font-size: 29px;
    line-height: 38px;
}

.release {
    font-size: 14px;
    line-height: 14px;
}

.gl {
    margin: 18px 16px 0 0;
    color: #d81848;
    font-weight: normal;
}

/* bottom panels */
.bottom {
    height: 154px;
    flex: none;
    display: flex;
    gap: 3px;
}

.graph {
    flex: 381;
    min-width: 0;
    display: flex;
    flex-direction: column;
}

.tabular {
    flex: 376;
    min-width: 0;
    background: #a0a0a0;
}

.animbar {
    height: 20px;
    flex: none;
    display: flex;
    align-items: center;
    padding-left: 7px;
}

.animbar .lbl {
    margin: 0 6px 0 8px;
}

.animbar button {
    width: 17px;
    height: 17px;
    flex: none;
    display: flex;
    align-items: center;
    justify-content: center;
}

.animbar svg {
    width: 12px;
    height: 12px;
}

.animbar select {
    width: 78px;
    height: 17px;
}

.animbar .exp {
    margin-left: 6px;
}

.animbar .more {
    width: 8px;
    margin: 0 2px 0 auto;
}

.chart {
    flex: 1;
    display: grid;
    grid-template: 29px 6px 26px 11px / 10px 6px 1fr;
    padding: 20px 18px 0 19px;
    background: #fff;
    column-gap: 2px;
}

.ylab, .xlab {
    font-weight: bold;
    color: #000;
}

.ylab {
    writing-mode: vertical-rl;
    transform: rotate(180deg);
    line-height: 10px;
    text-align: center;
}

.yticks {
    background: repeating-linear-gradient(#bbb 0 1px, transparent 1px 3px);
}

/* first and last samples sit on the left axis */
.plot {
    border: 1px solid #bbb;
    background:
        linear-gradient(#114, #114) 0 0 / 2px 3px no-repeat,
        linear-gradient(#a01020, #a01020) 0 100% / 2px 2px no-repeat;
}

.xticks {
    grid-column: 3;
    display: flex;
    border-left: 1px solid #bbb;
}

.xticks i {
    flex: 1;
    border-right: 1px solid #bbb;
}

.xlab {
    grid-column: 3;
    text-align: center;
    line-height: 30px;
}

.range {
    grid-column: 3;
    border: 1px solid #bbb;
}

.sheets {
    height: 15px;
    flex: none;
    display: flex;
    color: #555;
}

.sheets button {
    padding: 0 5px 0 4px;
}

.sheets .current {
    background: #fafafa;
    border: 1px solid #ddd;
    border-top: 0;
    color: #1f7fc4;
}

.data {
    border-collapse: collapse;
    background: #f0efee;
    line-height: 11px;
    table-layout: fixed;
    width: 271px;
}

.data th, .data td {
    padding: 0 0 0 2px;
    border-right: 1px solid #bbb;
    border-bottom: 1px solid #888;
    text-align: left;
    font-weight: normal;
    white-space: nowrap;
    height: 14px;
}

.data td {
    height: 12px;
    border-color: #ccc;
}

.data th { width: 76px; }
.data th:nth-child(1) { width: 11px; }
.data th:nth-child(2) { width: 37px; }
.data th:last-child { width: 71px; }

.data label {
    display: flex;
    align-items: center;
    gap: 4px;
}

.data input {
    width: 10px;
    height: 10px;
    margin: 0;
    appearance: none;
    border: 1px solid #999;
    background: url("data:image/svg+xml,%3Csvg xmlns='http://www.w3.org/2000/svg' viewBox='0 0 8 8'%3E%3Cpath d='M1 4l2 2.5L7 1' fill='none' stroke='%23000' stroke-width='1.5'/%3E%3C/svg%3E") #fff;
}

.min { color: #c01838; }
.max { color: #38a838; }
.avg { color: #3030c0; }

/* status bar */
.status {
    height: 9px;
    flex: none;
    overflow: hidden;
    display: flex;
    align-items: flex-start;
    justify-content: flex-end;
    gap: 9px;
    background: #0f7dc4;
    color: #fff;
    font-family: "Open Sans", sans-serif;
    line-height: 16px;
    white-space: nowrap;
}

.status span {
    display: flex;
    gap: 2px;
}

.status .wide {
    padding-right: 5px;
}

.status svg {
    width: 12px;
    height: 12px;
    margin-top: 2px;
}
```
